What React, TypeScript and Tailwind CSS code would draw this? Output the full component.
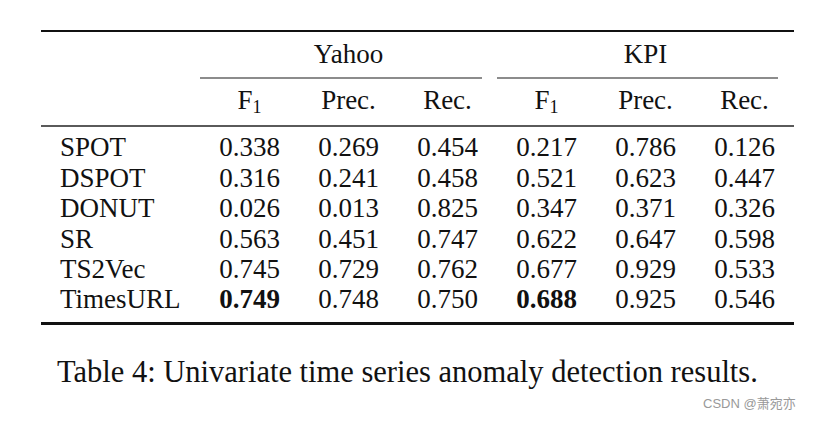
const serif = { fontFamily: '"Liberation Serif", "Times New Roman", serif' };

type Row = { name: string; vals: string[]; bold?: number[] };

const rows: Row[] = [
  { name: "SPOT", vals: ["0.338", "0.269", "0.454", "0.217", "0.786", "0.126"] },
  { name: "DSPOT", vals: ["0.316", "0.241", "0.458", "0.521", "0.623", "0.447"] },
  { name: "DONUT", vals: ["0.026", "0.013", "0.825", "0.347", "0.371", "0.326"] },
  { name: "SR", vals: ["0.563", "0.451", "0.747", "0.622", "0.647", "0.598"] },
  { name: "TS2Vec", vals: ["0.745", "0.729", "0.762", "0.677", "0.929", "0.533"] },
  { name: "TimesURL", vals: ["0.749", "0.748", "0.750", "0.688", "0.925", "0.546"], bold: [0, 3] },
];

function F1() {
  return (
    <span>
      F<span className="relative top-[4px] text-[18px]">1</span>
    </span>
  );
}

const subHeads = ["f1", "Prec.", "Rec.", "f1", "Prec.", "Rec."];

export default function App() {
  return (
    <div className="relative h-[421px] w-[817px] bg-white text-[#111]" style={serif}>
      <div className="ml-[41px] flex w-[753px] flex-col pt-[30px]">
        {/* top rule */}
        <div className="h-[2px] w-full bg-[#111]" />

        {/* group header */}
        <div className="mt-[6.5px] grid grid-cols-[159px_297px_297px] text-[27px] leading-[30.4px]">
          <div />
          <div className="text-center">Yahoo</div>
          <div className="text-center">KPI</div>
        </div>

        {/* cmidrules */}
        <div className="mt-[8px] grid grid-cols-[159px_297px_297px]">
          <div />
          <div className="mr-[15px] h-[2px] bg-[#8c8c8c]" />
          <div className="mr-[16px] h-[2px] bg-[#8c8c8c]" />
        </div>

        {/* sub header */}
        <div className="mt-[6.5px] grid grid-cols-[159px_repeat(6,99px)] text-[27px] leading-[30.4px]">
          <div />
          {subHeads.map((h, i) => (
            <div key={i} className="text-center">
              {h === "f1" ? <F1 /> : h}
            </div>
          ))}
        </div>

        {/* midrule */}
        <div className="mt-[6px] h-[2px] w-full bg-[#5a5a5a]" />

        {/* body */}
        <div className="mt-[5.5px] flex flex-col text-[27px] leading-[30.4px]">
          {rows.map((r) => (
            <div key={r.name} className="grid grid-cols-[159px_repeat(6,99px)]">
              <div className="pl-[19px]">{r.name}</div>
              {r.vals.map((v, i) => (
                <div key={i} className={`text-center ${r.bold?.includes(i) ? "font-bold" : ""}`}>
                  {v}
                </div>
              ))}
            </div>
          ))}
        </div>

        {/* bottom rule */}
        <div className="mt-[7px] h-[3px] w-full bg-[#111]" />
      </div>

      <div className="mt-[30px] pl-[57px] text-[30.5px] leading-[34px] text-[#111]">
        Table 4: Univariate time series anomaly detection results.
      </div>

      <div
        className="absolute left-[703px] top-[395px] text-[13px] leading-[18px] text-[#999]"
        style={{ fontFamily: '"Liberation Sans", "Noto Sans CJK SC", sans-serif' }}
      >
        CSDN @萧宛亦
      </div>
    </div>
  );
}
